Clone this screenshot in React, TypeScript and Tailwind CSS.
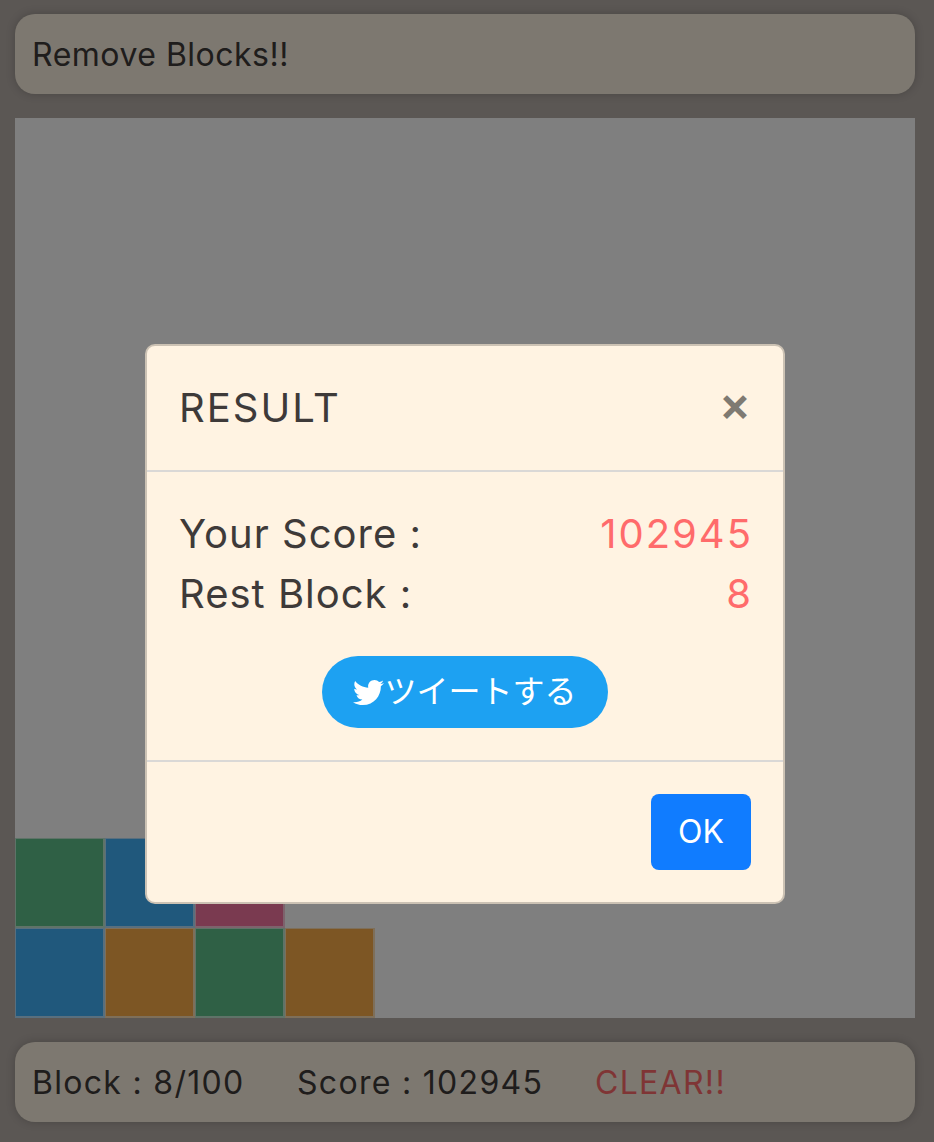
import { FaTwitter } from 'react-icons/fa';

const font = { fontFamily: 'Inter, "Noto Sans CJK JP", sans-serif' };

const rows = [
  [{ c: 'bg-[#5ec08a]' }, { c: 'bg-[#40b0f8]' }, { c: 'bg-[#f474a0]' }],
  [{ c: 'bg-[#40b0f8]' }, { c: 'bg-[#faac48]' }, { c: 'bg-[#5ec08a]' }, { c: 'bg-[#faac48]' }],
];

export default function App() {
  return (
    <div className="relative w-full h-[1142px] overflow-hidden bg-[#b6aea8] text-[#3e3a39]" style={font}>
      <div className="w-[930px] px-[15px] pt-[14px]">
        <header className="h-[80px] flex items-center px-[17px] pt-[2px] rounded-[20px] bg-[#faf0e0] shadow-[0_0_10px_rgba(0,0,0,0.2)] text-[32px] tracking-[0.5px]">
          Remove Blocks!!
        </header>

        {/* game board */}
        <div className="mt-[24px] h-[900px] bg-white flex flex-col justify-end">
          {rows.map((row, i) => (
            <div key={i} className="flex">
              {row.map((b, j) => (
                <div key={j} className={`w-[90px] h-[90px] border-l border-t border-r-2 border-b-2 border-white/60 ${b.c}`}></div>
              ))}
            </div>
          ))}
        </div>

        <footer className="mt-[24px] h-[80px] flex items-center px-[17px] pt-[2px] rounded-[20px] bg-[#faf0e0] shadow-[0_0_10px_rgba(0,0,0,0.2)] text-[32px] tracking-[1.3px]">
          <span className="w-[265px]">Block : 8/100</span>
          <span className="w-[298px]">Score : 102945</span>
          <span className="text-[#ff6b6b]">CLEAR!!</span>
        </footer>
      </div>

      {/* backdrop */}
      <div className="absolute inset-0 bg-black/50"></div>

      {/* result modal */}
      <div className="absolute inset-0 pr-[4px] pt-[344px] flex justify-center items-start">
        <div className="w-[640px] h-[560px] flex flex-col rounded-[10px] border-2 border-black/20 bg-[#fff3e2]">
          <div className="h-[126px] flex items-center justify-between px-[32px] border-b-2 border-[#dad8d6]">
            <h5 className="text-[40px] leading-[60px] tracking-[2px]">RESULT</h5>
            <span className="text-[48px] leading-none font-semibold text-[#7f7a72] pb-[8px]">×</span>
          </div>
          <div className="flex-1 px-[32px] pt-[32px]">
            <div className="flex justify-between text-[40px] leading-[60px] tracking-[1px]">
              <span>Your Score :</span>
              <span className="text-[#ff6b6b] tracking-[2px] -mr-[2px]">102945</span>
            </div>
            <div className="flex justify-between text-[40px] leading-[60px] tracking-[1px]">
              <span>Rest Block :</span>
              <span className="text-[#ff6b6b] tracking-[2px] -mr-[2px]">8</span>
            </div>
            <div className="mt-[32px] flex justify-center">
              <div className="h-[72px] w-[286px] rounded-full bg-[#1da1f2] text-white text-[32px] flex items-center justify-center">
                <FaTwitter className="w-[31px] h-[31px] mt-[1px]" />
                <span>ツイートする</span>
              </div>
            </div>
          </div>
          <div className="h-[142px] flex items-center justify-end px-[32px] border-t-2 border-[#dad8d6]">
            <button className="w-[100px] h-[76px] rounded-[8px] bg-[#107cff] text-white text-[32px]">OK</button>
          </div>
        </div>
      </div>
    </div>
  );
}
